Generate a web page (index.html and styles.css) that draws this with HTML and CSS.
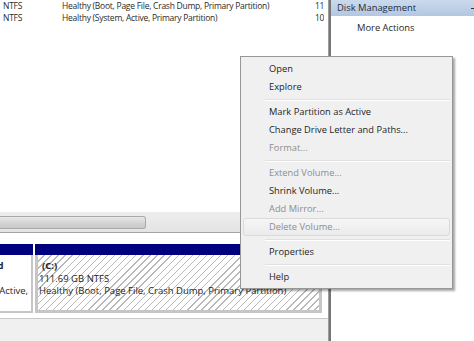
FILE: index.html
```html
<!DOCTYPE html>
<html lang="en">

<head>
  <meta charset="UTF-8">
  <meta name="viewport" content="width=device-width, initial-scale=1.0">
  <title>Disk Management</title>
  <link rel="stylesheet" href="styles.css">
</head>

<body>

  <div class="window">
    <div class="main-pane">
      <div class="volume-list">
        <div class="volume-row">
          <span class="col-fs">NTFS</span>
          <span class="col-status">Healthy (Boot, Page File, Crash Dump, Primary Partition)</span>
          <span class="col-size">111.69 GB</span>
        </div>
        <div class="volume-row">
          <span class="col-fs">NTFS</span>
          <span class="col-status">Healthy (System, Active, Primary Partition)</span>
          <span class="col-size">100 MB</span>
        </div>
      </div>

      <div class="hscroll">
        <div class="hscroll-thumb"></div>
      </div>

      <div class="disk-map">
        <div class="partition reserved">
          <div class="partition-head"></div>
          <div class="partition-body">
            <div class="clip">
              <div class="shifted">
                <div class="part-name">System Reserved</div>
                <div>100 MB NTFS</div>
                <div>Healthy (System, Active, Primary Partition)</div>
              </div>
            </div>
          </div>
        </div>
        <div class="partition system">
          <div class="partition-head"></div>
          <div class="partition-body hatched">
            <div class="part-name">(C:)</div>
            <div>111.69 GB NTFS</div>
            <div>Healthy (Boot, Page File, Crash Dump, Primary Partition)</div>
          </div>
        </div>
      </div>

      <div class="disk-footer"></div>
    </div>

    <div class="splitter"></div>

    <div class="actions-pane">
      <div class="actions-head">
        <span>Disk Management</span>
        <span class="collapse"></span>
      </div>
      <div class="actions-item">More Actions</div>
    </div>
  </div>

  <!-- menu for the selected partition -->
  <ul class="context-menu">
    <li class="menu-item">Open</li>
    <li class="menu-item">Explore</li>
    <li class="menu-sep"></li>
    <li class="menu-item">Mark Partition as Active</li>
    <li class="menu-item">Change Drive Letter and Paths...</li>
    <li class="menu-item disabled">Format...</li>
    <li class="menu-sep"></li>
    <li class="menu-item disabled">Extend Volume...</li>
    <li class="menu-item">Shrink Volume...</li>
    <li class="menu-item disabled">Add Mirror...</li>
    <li class="menu-item disabled hover">Delete Volume...</li>
    <li class="menu-sep"></li>
    <li class="menu-item">Properties</li>
    <li class="menu-sep"></li>
    <li class="menu-item">Help</li>
  </ul>

</body>

</html>
```

FILE: styles.css
```css
html,
body {
  margin: 0;
  padding: 0;
  width: 474px;
  height: 341px;
  overflow: hidden;
  background-color: #fff;
  font-family: "Open Sans", "Noto Sans", sans-serif;
  font-size: 8.5px;
  color: #1e1e1e;
}

.window {
  display: grid;
  grid-template-columns: 328px 3px 1fr;
  height: 341px;
}

/* left side: volume list + graphical view */
.main-pane {
  display: flex;
  flex-direction: column;
  overflow: hidden;
}

.volume-list {
  height: 212px;
}

.volume-row {
  display: flex;
  height: 12px;
  line-height: 12px;
  white-space: nowrap;
  letter-spacing: -0.25px;
  color: #2a2a2a;
}

.col-fs {
  width: 59px;
  padding-left: 3px;
  flex: none;
}

.col-status {
  width: 253px;
  flex: none;
}

.col-size {
  width: 9px;
  overflow: hidden;
  flex: none;
}

.hscroll {
  height: 20px;
  background: linear-gradient(#ededed, #e4e4e4);
  border-bottom: 1px solid #a4a4a4;
  display: flex;
  align-items: center;
}

.hscroll-thumb {
  width: 145px;
  height: 11px;
  border: 1px solid #a9a9a9;
  border-left: none;
  border-radius: 0 3px 3px 0;
  background: linear-gradient(#e9e9e9, #d2d2d2 60%, #c9c9c9);
}

.disk-map {
  height: 85px;
  padding-top: 11px;
  box-sizing: border-box;
  display: flex;
  gap: 2px;
  font-size: 9.5px;
}

.partition {
  display: flex;
  flex-direction: column;
  flex: none;
}

.partition-head {
  height: 11px;
  background-color: #00007f;
}

.partition-body {
  height: 58px;
  box-sizing: border-box;
  padding: 2px 0 0 2px;
  line-height: 12.5px;
  white-space: nowrap;
  overflow: hidden;
}

.reserved {
  width: 33px;
}

.reserved .partition-body {
  border-right: 2px solid #c6c6c6;
  border-bottom: 2px solid #c6c6c6;
  padding-top: 5px;
  padding-left: 0;
}

.clip {
  width: 28px;
  overflow: hidden;
}

.shifted {
  margin-left: -77px;
}

.system {
  width: 300px;
}

.system .partition-body {
  width: 287px;
  border: 3px solid #c6c6c6;
  border-top: none;
  padding-top: 5px;
  padding-left: 1px;
}

.hatched {
  background: repeating-linear-gradient(135deg, #fff 0, #fff 4px, #b8b8b8 4px, #b8b8b8 5px);
}

.part-name {
  font-weight: bold;
  padding-left: 3px;
}

.shifted .part-name {
  padding-left: 0;
}

.disk-footer {
  flex: 1;
  border-top: 1px solid #c8c8c8;
  background-color: #f0f0f0;
}

.splitter {
  background-color: #767676;
  border-left: 1px solid #9c9c9c;
  box-sizing: border-box;
}

/* right side: actions */
.actions-pane {
  background-color: #fff;
  overflow: hidden;
  font-size: 9.4px;
}

.actions-head {
  height: 16px;
  line-height: 16px;
  padding-left: 6px;
  display: flex;
  justify-content: space-between;
  align-items: center;
  background: linear-gradient(#cbd9ec, #b3c7e1);
  color: #1e2d42;
  white-space: nowrap;
}

.collapse {
  width: 3px;
  height: 1px;
  background-color: #333;
}

.actions-item {
  height: 24px;
  line-height: 24px;
  padding-left: 26px;
  color: #2a2a2a;
}

/* context menu */
.context-menu {
  position: absolute;
  left: 240px;
  top: 56px;
  width: 213px;
  box-sizing: border-box;
  margin: 0;
  padding: 3px 2px 2px 2px;
  list-style: none;
  background-color: #f0f0f0;
  border: 1px solid #979797;
  box-shadow: 2px 2px 2px rgba(0, 0, 0, 0.35);
  font-size: 9.3px;
}

.menu-item {
  height: 18px;
  line-height: 18px;
  padding-left: 26px;
  box-sizing: border-box;
  white-space: nowrap;
}

.menu-item.disabled {
  color: #8e8e8e;
}

.menu-item.hover {
  border: 1px solid #dadada;
  border-radius: 3px;
  background: linear-gradient(#f6f6f6, #ebebeb);
  padding-left: 25px;
  line-height: 16px;
}

.menu-sep {
  height: 1px;
  margin: 3px 0 2px 22px;
  background-color: #e0e0e0;
  border-bottom: 1px solid #fff;
}
```
